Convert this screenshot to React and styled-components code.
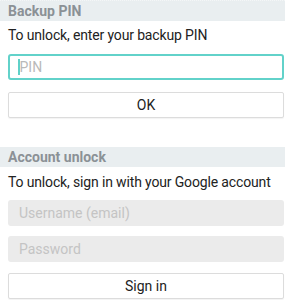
import styled, { createGlobalStyle } from "styled-components";

const GlobalStyle = createGlobalStyle`
  html, body {
    margin: 0;
    padding: 0;
    background: #ffffff;
    font-family: Roboto, "Liberation Sans", sans-serif;
  }
`;

const Page = styled.div`
  width: 285px;
  height: 300px;
  overflow: hidden;
  background: #ffffff;
`;

const Section = styled.section`
  display: flex;
  flex-direction: column;
  margin-top: ${({ top }) => top}px;
`;

const SectionHeader = styled.div`
  height: 20px;
  display: flex;
  align-items: center;
  padding-left: 8px;
  background: #e9eef0;
  color: #8b9196;
  font-size: 14px;
  font-weight: 700;
  border-top: ${({ dotted }) => (dotted ? "1px dotted #f4f6f7" : "none")};
`;

const Body = styled.div`
  display: flex;
  flex-direction: column;
  padding: 0 1px 0 8px;
`;

const Prompt = styled.p`
  margin: ${({ top }) => top}px 0 ${({ bottom }) => bottom}px;
  font-size: 14px;
  line-height: 16px;
  letter-spacing: -0.15px;
  color: #222222;
`;

const Field = styled.div`
  height: 26px;
  box-sizing: border-box;
  display: flex;
  align-items: center;
  padding-left: ${({ focused }) => (focused ? 8 : 11)}px;
  border-radius: 3px;
  margin-bottom: ${({ gap }) => gap}px;
  border: ${({ focused }) => (focused ? "2px solid #62d2ca" : "none")};
  background: ${({ focused }) => (focused ? "#ffffff" : "#ebebeb")};
  color: ${({ focused }) => (focused ? "#b9b9b9" : "#c4c4c4")};
  font-size: 14px;
`;

const Cursor = styled.span`
  width: 1.5px;
  height: 16px;
  background: #5fd1c9;
`;

const Button = styled.div`
  height: 26px;
  box-sizing: border-box;
  display: flex;
  align-items: center;
  justify-content: center;
  border: 1px solid #dcdcdc;
  border-radius: 2px;
  background: #ffffff;
  color: #222222;
  font-size: 14px;
  box-shadow: 0 1px 1px rgba(0, 0, 0, 0.05);
`;

const App = () => {
  return (
    <Page>
      <GlobalStyle />
      <Section top={0}>
        <SectionHeader dotted>Backup PIN</SectionHeader>
        <Body>
          <Prompt top={6} bottom={11}>
            To unlock, enter your backup PIN
          </Prompt>
          <Field focused gap={12}>
            <Cursor />
            PIN
          </Field>
          <Button>OK</Button>
        </Body>
      </Section>
      <Section top={29}>
        <SectionHeader>Account unlock</SectionHeader>
        <Body>
          <Prompt top={7} bottom={10}>
            To unlock, sign in with your Google account
          </Prompt>
          <Field gap={10}>Username (email)</Field>
          <Field gap={11}>Password</Field>
          <Button>Sign in</Button>
        </Body>
      </Section>
    </Page>
  );
};

export default App;
